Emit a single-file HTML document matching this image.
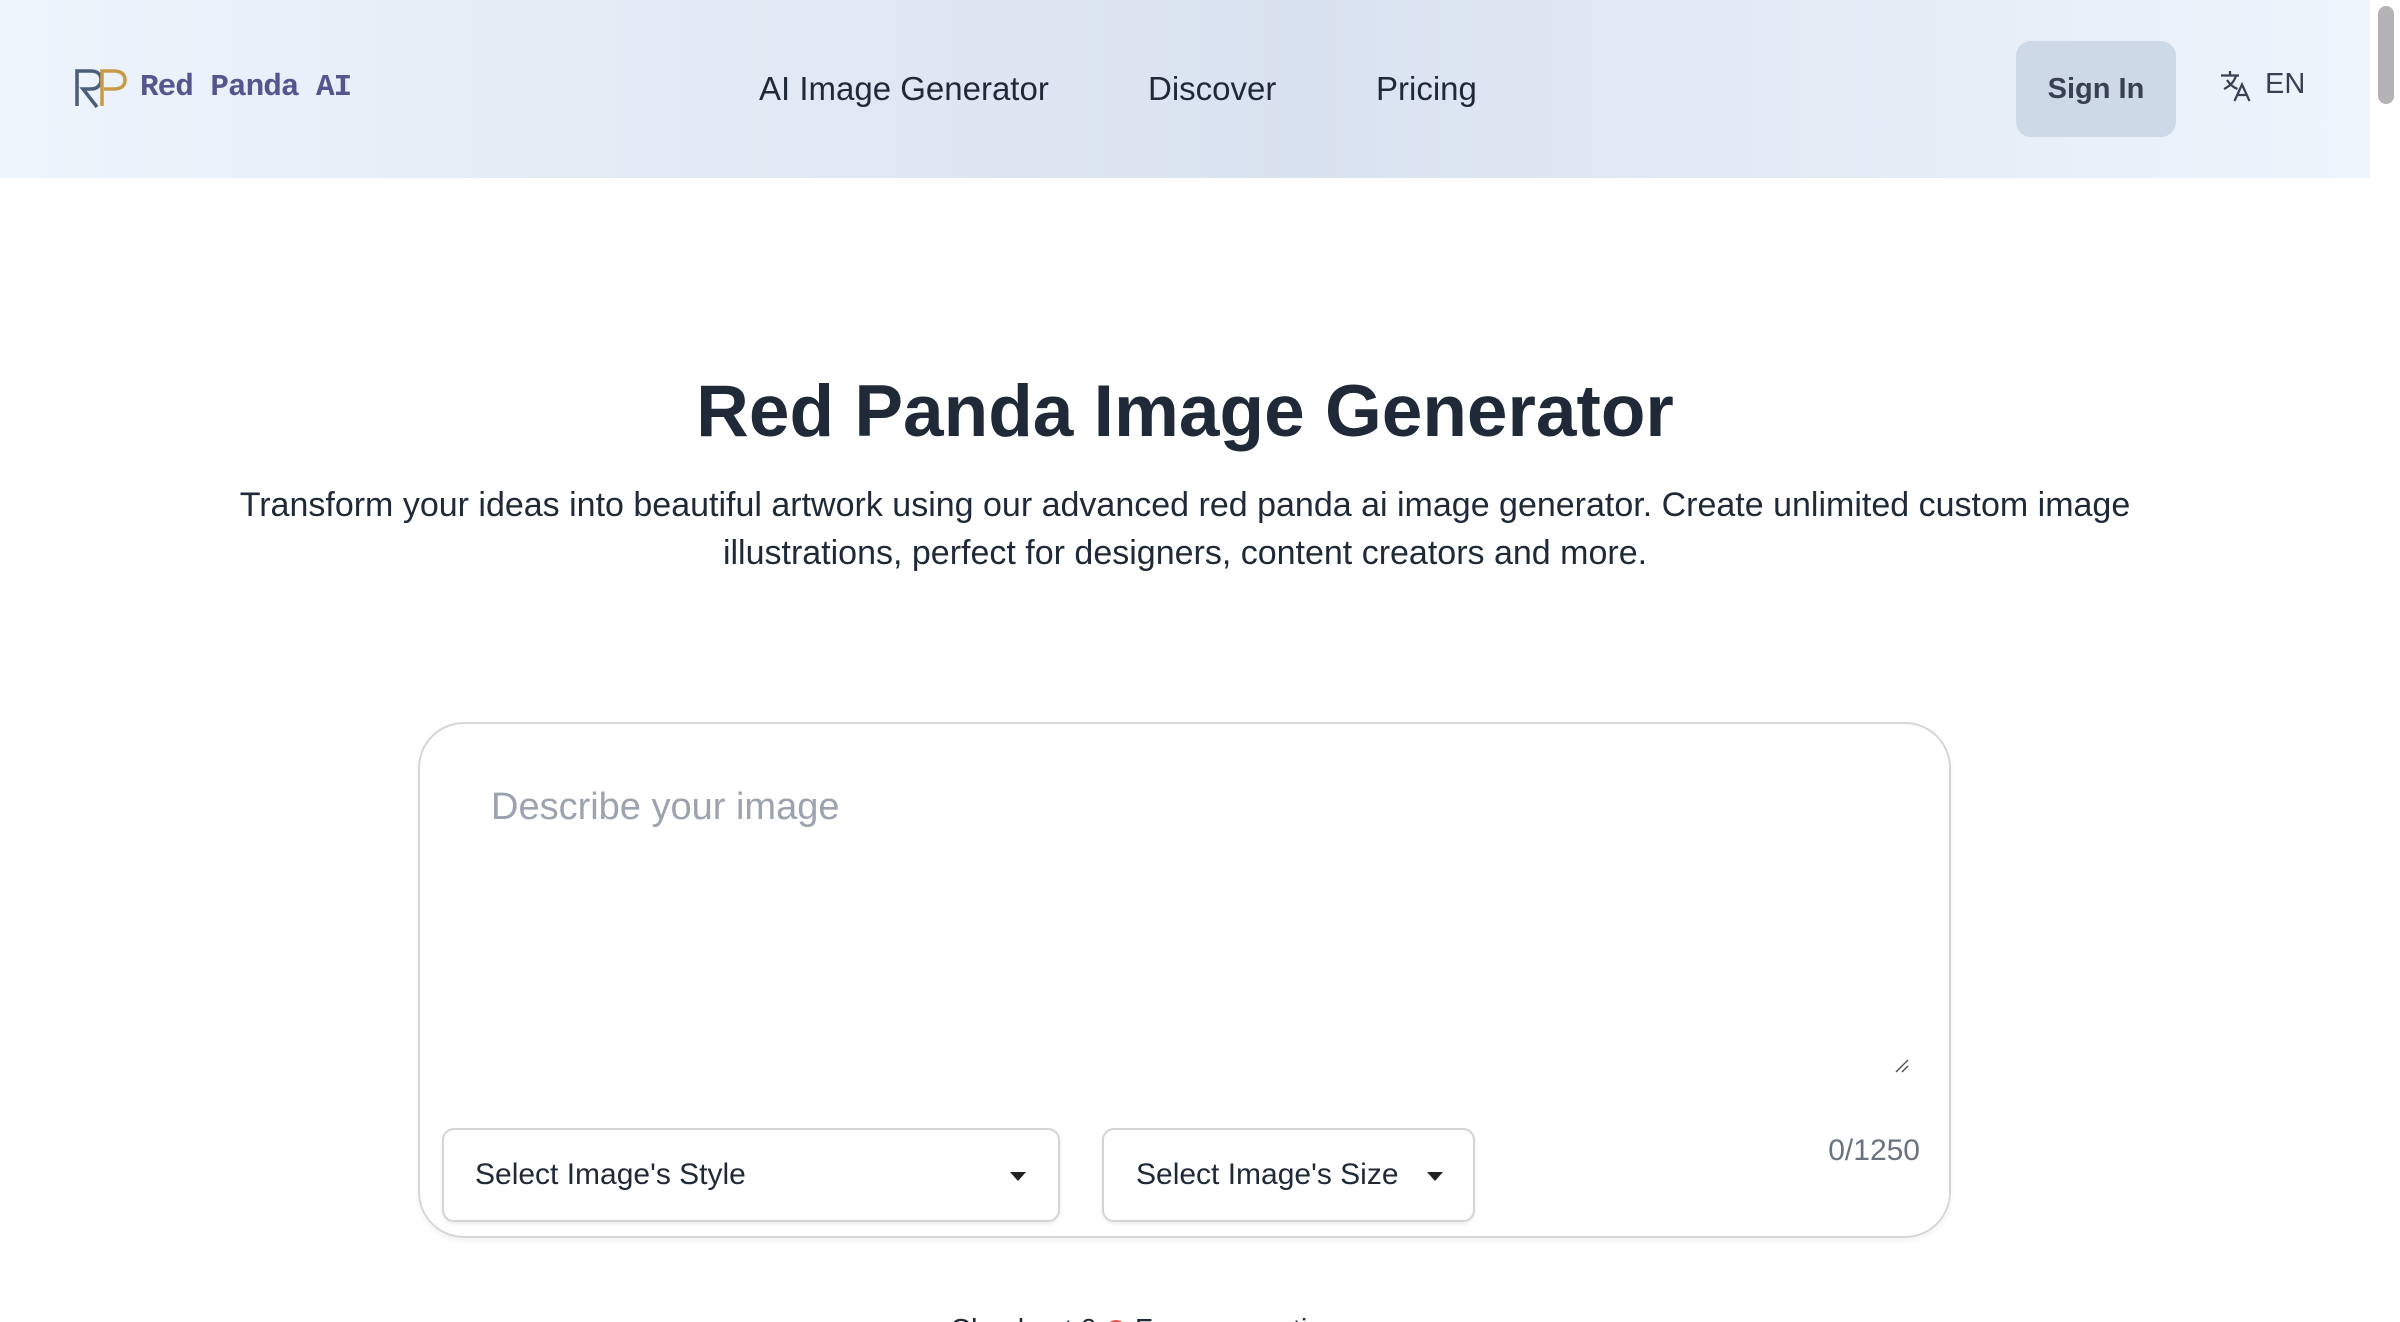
<!DOCTYPE html>
<html><head><meta charset="utf-8"><style>
*{margin:0;padding:0;box-sizing:border-box}
html,body{width:2400px;height:1322px;overflow:hidden;background:#fff;font-family:"Liberation Sans",sans-serif;position:relative}
.hdr{position:absolute;left:0;top:0;width:2370px;height:178px;background:linear-gradient(90deg,#eef4fc 0%,#e3eaf5 30%,#d9e2f0 55%,#e3ebf6 75%,#eef4fc 100%)}
.a{position:absolute;white-space:nowrap}
.nav{font-size:33px;color:#1f2937;top:70px}
.sb{position:absolute;left:2378px;top:6px;width:16px;height:98px;border-radius:8px;background:#b3b3b6}
.box{position:absolute;left:418px;top:722px;width:1533px;height:516px;border:2px solid #d6d6d6;border-radius:46px;box-shadow:0 3px 6px rgba(0,0,0,.05)}
.sel{position:absolute;top:1128px;height:94px;border:2px solid #d4d4d4;border-radius:12px;box-shadow:0 2px 3px rgba(0,0,0,.08);font-size:30px;color:#1f2937;line-height:90px}
.tri{position:absolute;top:42px;width:0;height:0;border-left:8px solid transparent;border-right:8px solid transparent;border-top:9px solid #222}
</style></head><body>
<div class="hdr"></div>
<svg class="a" style="left:74px;top:68px" width="56" height="40" viewBox="0 0 56 40">
<path d="M3 38V3h14c8 0 10 5 10 9s-3 9-10 9H9l14 18" fill="none" stroke="#4b5d78" stroke-width="3.5"/>
<path d="M28 38V3h12c8 0 11 4 11 9s-3 9-11 9h-10" fill="none" stroke="#c99a45" stroke-width="3.5"/>
</svg>
<div class="a" style="left:140px;top:70px;font-family:'Liberation Mono',monospace;font-weight:bold;font-size:31px;letter-spacing:-1px;color:#57548e">Red Panda AI</div>
<div class="a nav" style="left:759px">AI Image Generator</div>
<div class="a nav" style="left:1148px">Discover</div>
<div class="a nav" style="left:1376px">Pricing</div>
<div class="a" style="left:2016px;top:41px;width:160px;height:96px;border-radius:15px;background:#cdd9e6;font-weight:bold;font-size:29px;color:#374151;text-align:center;line-height:96px">Sign In</div>
<svg class="a" style="left:2218px;top:68px" width="36" height="36" viewBox="0 0 24 24" fill="none" stroke="#374151" stroke-width="1.5"><path d="M2 5h12M8 2v3M4 14c4-2 7-5 8-9M6 8c2 3 4 5 7 6M11 22l5-11 5 11M13 18h6"/></svg>
<div class="a" style="left:2265px;top:68px;font-size:29px;color:#374151">EN</div>
<div class="sb"></div>
<div class="a" style="left:0;width:2370px;text-align:center;top:370px;font-size:73px;font-weight:bold;color:#1f2937">Red Panda Image Generator</div>
<div class="a" style="left:0;width:2370px;text-align:center;top:481px;font-size:34px;line-height:48px;color:#1f2937">Transform your ideas into beautiful artwork using our advanced red panda ai image generator. Create unlimited custom image<br>illustrations, perfect for designers, content creators and more.</div>
<div class="box"></div>
<div class="a" style="left:491px;top:786px;font-size:38px;color:#9ca3af">Describe your image</div>
<svg class="a" style="left:1894px;top:1058px" width="16" height="16"><path d="M2 14L14 2M8 14L14 8" stroke="#555" stroke-width="1.5"/></svg>
<div class="sel" style="left:442px;width:618px"><span style="position:absolute;left:31px">Select Image's Style</span><div class="tri" style="left:566px"></div></div>
<div class="sel" style="left:1102px;width:373px"><span style="position:absolute;left:32px">Select Image's Size</span><div class="tri" style="left:323px"></div></div>
<div class="a" style="left:1820px;top:1134px;width:100px;text-align:right;font-size:30px;color:#6b7280">0/1250</div>
<div class="a" style="left:950px;top:1314px;font-size:29px;color:#1f2937">Checkout 0 <span style="display:inline-block;width:22px;height:22px;border-radius:50%;background:#e05252;vertical-align:middle"></span> Free generations</div>
</body></html>
